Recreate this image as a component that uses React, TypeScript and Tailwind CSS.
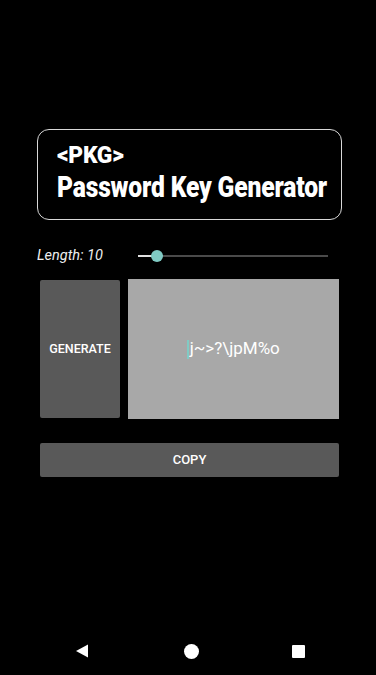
import { useState } from "react";

export default function App() {
  const [length] = useState(10);
  const [password] = useState("j~>?\\jpM%o");

  return (
    <div
      className="flex h-[675px] w-[376px] flex-col bg-black text-white"
      style={{ fontFamily: "Roboto, 'Noto Sans', sans-serif" }}
    >
      <div className="flex flex-1 flex-col pt-[129px]">
        {/* title card */}
        <div className="ml-[37px] mr-[34px] h-[91px] rounded-[12px] border-[1.5px] border-[#d8d8d8] pl-[19px] pt-[11px]">
          <div
            className="origin-left scale-x-[0.95] text-[24px] font-black leading-[28px] tracking-[-0.3px]"
            style={{ fontFamily: "Roboto, sans-serif" }}
          >
            &lt;PKG&gt;
          </div>
          <div
            className="mt-[2px] origin-left scale-x-[0.85] whitespace-nowrap text-[29px] font-black leading-[33px] tracking-[-0.2px]"
            style={{ fontFamily: "Roboto, sans-serif" }}
          >
            Password Key Generator
          </div>
        </div>

        {/* length slider */}
        <div className="mt-[25px] flex h-[22px] items-center pl-[37px] pr-[48px]">
          <span className="w-[101px] text-[14.5px] italic text-[#eeeeee]">Length: {length}</span>
          <div className="relative flex h-[22px] flex-1 items-center">
            <div className="h-[2px] w-[19px] bg-[#e0e0e0]" />
            <div className="h-[2px] flex-1 bg-[#4a4a4a]" />
            <div className="absolute left-[13px] top-[5px] h-[12px] w-[12px] rounded-full bg-[#80cbc4]" />
          </div>
        </div>

        {/* generate + output */}
        <div className="mt-[12px] flex h-[140px] gap-[8px] pl-[40px] pr-[37px]">
          <button className="mb-[1px] mt-[1px] w-[80px] rounded-[2px] bg-[#595959] text-[12.5px] font-medium text-white">
            GENERATE
          </button>
          <div className="flex flex-1 items-center justify-center bg-[#a8a8a8] text-[17px] text-white">
            <span className="mr-[1px] inline-block h-[19px] w-[1.5px] bg-[#80cbc4]" />
            {password}
          </div>
        </div>

        {/* copy */}
        <button className="ml-[40px] mr-[37px] mt-[24px] h-[34px] rounded-[2px] bg-[#595959] text-[13px] font-medium text-white">
          COPY
        </button>
      </div>

      {/* navigation bar */}
      <div className="flex h-[48px] items-center justify-between pl-[74px] pr-[71px]">
        <svg width="16" height="16" viewBox="0 0 16 16">
          <path d="M2 8 L14 1.5 L14 14.5 Z" fill="white" />
        </svg>
        <div className="h-[15px] w-[15px] rounded-full bg-white" />
        <div className="h-[13px] w-[13px] rounded-[1px] bg-white" />
      </div>
    </div>
  );
}
